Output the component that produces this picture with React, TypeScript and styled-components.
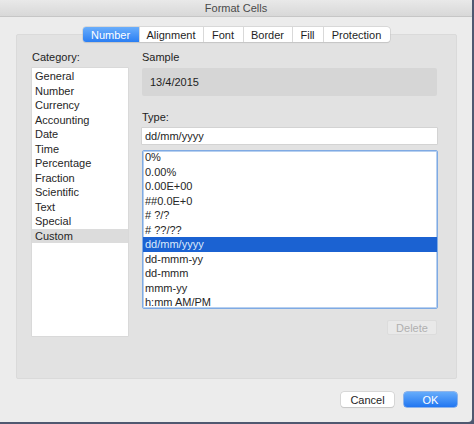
import React from 'react'
import styled, { createGlobalStyle } from 'styled-components'

const GlobalStyle = createGlobalStyle`
  html, body {
    margin: 0;
    padding: 0;
    background: #4f5870;
  }
  body {
    width: 474px;
    height: 424px;
    overflow: hidden;
    font-family: "Liberation Sans", Arial, sans-serif;
    font-size: 10.5px;
    color: #1e1e1e;
  }
`

const Window = styled.div`
  width: 472px;
  height: 422px;
  background: #ececec;
  display: flex;
  flex-direction: column;
  border-bottom-right-radius: 4px;
`

const TitleBar = styled.div`
  height: 16px;
  background: linear-gradient(#e9e9e9, #d8d8d8);
  border-bottom: 1px solid #c6c6c6;
  display: flex;
  align-items: center;
  justify-content: center;
  font-size: 11px;
  color: #4a4a4a;
`

const Body = styled.div`
  flex: 1;
  display: flex;
  flex-direction: column;
  padding: 10px 15px 0 16px;
`

const TabRow = styled.div`
  display: flex;
  justify-content: center;
  position: relative;
  z-index: 1;
  padding-right: 1px;
`

const Tabs = styled.div`
  display: flex;
  height: 15px;
  background: #ffffff;
  border-radius: 3px;
  box-shadow: 0 0 0 0.5px #c4c4c4, 0 1px 1px rgba(0, 0, 0, 0.12);
`

const Tab = styled.div<{ $active?: boolean; $w: number }>`
  width: ${p => p.$w}px;
  display: flex;
  align-items: center;
  justify-content: center;
  font-size: 11px;
  color: ${p => (p.$active ? '#ffffff' : '#1e1e1e')};
  background: ${p => (p.$active ? 'linear-gradient(#6aaefb, #2a7ef3)' : 'transparent')};
  border-radius: ${p => (p.$active ? '3px 0 0 3px' : '0')};
  & + & {
    border-left: 1px solid #d9d9d9;
  }
`

const Panel = styled.div`
  margin-top: -8px;
  height: 345px;
  box-sizing: border-box;
  background: #e2e2e2;
  border: 1px solid #dadada;
  border-radius: 2px;
  display: grid;
  grid-template-columns: 96px 296px;
  column-gap: 14px;
  padding: 16px 0 0 15px;
`

const Column = styled.div`
  display: flex;
  flex-direction: column;
`

const Label = styled.div<{ $gap?: number }>`
  height: 13px;
  line-height: 13px;
  font-size: 11px;
  margin-top: ${p => p.$gap ?? 0}px;
  margin-bottom: 4px;
`

const CategoryList = styled.div`
  height: 268px;
  background: #ffffff;
  box-shadow: 0 0 0 0.5px #cfcfcf;
  padding-top: 1px;
  box-sizing: border-box;
`

const Item = styled.div<{ $selected?: 'gray' | 'blue' }>`
  height: 14.5px;
  line-height: 14.5px;
  padding-left: 3px;
  font-size: 11px;
  white-space: nowrap;
  color: ${p => (p.$selected === 'blue' ? '#dce9fb' : '#262626')};
  background: ${p =>
    p.$selected === 'blue' ? '#1b62d2' : p.$selected === 'gray' ? '#dcdcdc' : 'transparent'};
`

const SampleBox = styled.div`
  height: 28px;
  margin-right: 1px;
  background: #d6d6d6;
  border-radius: 2px;
  display: flex;
  align-items: center;
  padding-left: 8px;
  font-size: 11px;
`

const TypeInput = styled.div`
  height: 16px;
  margin-right: 1px;
  background: #ffffff;
  box-shadow: 0 0 0 0.5px #c4c4c4;
  display: flex;
  align-items: center;
  padding-left: 3px;
  font-size: 11px;
`

const FormatList = styled.div`
  margin-top: 6px;
  height: 159px;
  box-sizing: border-box;
  background: #ffffff;
  border: 1px solid #7faae3;
  box-shadow: inset 0 0 0 1px #b7d0f0;
  border-radius: 2px;
  overflow: hidden;
  & > :first-child {
    margin-top: -1px;
  }
  & > div {
    padding-left: 2px;
  }
`

const Actions = styled.div`
  display: flex;
  justify-content: flex-end;
  margin-top: 11px;
  padding-right: 1px;
`

const DeleteButton = styled.div`
  width: 50px;
  height: 15px;
  background: #e9e9e9;
  border: 1px solid #dcdcdc;
  border-radius: 2px;
  box-sizing: border-box;
  display: flex;
  align-items: center;
  justify-content: center;
  font-size: 11px;
  color: #b0b0b0;
`

const Footer = styled.div`
  display: flex;
  justify-content: flex-end;
  gap: 10px;
  margin-top: 13px;
`

const Button = styled.div<{ $primary?: boolean }>`
  width: 53px;
  height: 15px;
  border-radius: 3px;
  display: flex;
  align-items: center;
  justify-content: center;
  font-size: 11px;
  color: ${p => (p.$primary ? '#ffffff' : '#1e1e1e')};
  background: ${p => (p.$primary ? 'linear-gradient(#66acfb, #2176f1)' : '#ffffff')};
  box-shadow: ${p =>
    p.$primary ? '0 0 0 0.5px #2f7be8' : '0 0 0 0.5px #c4c4c4, 0 1px 1px rgba(0,0,0,0.15)'};
`

const tabs = [
  { label: 'Number', w: 56 },
  { label: 'Alignment', w: 63 },
  { label: 'Font', w: 39 },
  { label: 'Border', w: 48 },
  { label: 'Fill', w: 30 },
  { label: 'Protection', w: 66 },
]

const categories = [
  'General', 'Number', 'Currency', 'Accounting', 'Date', 'Time',
  'Percentage', 'Fraction', 'Scientific', 'Text', 'Special', 'Custom',
]

const formats = [
  '0%', '0.00%', '0.00E+00', '##0.0E+0', '# ?/?', '# ??/??',
  'dd/mm/yyyy', 'dd-mmm-yy', 'dd-mmm', 'mmm-yy', 'h:mm AM/PM',
]

const App = () => (
  <>
    <GlobalStyle />
    <Window>
      <TitleBar>Format Cells</TitleBar>
      <Body>
        <TabRow>
          <Tabs>
            {tabs.map(t => (
              <Tab key={t.label} $w={t.w} $active={t.label === 'Number'}>
                {t.label}
              </Tab>
            ))}
          </Tabs>
        </TabRow>
        <Panel>
          <Column>
            <Label>Category:</Label>
            <CategoryList>
              {categories.map(c => (
                <Item key={c} $selected={c === 'Custom' ? 'gray' : undefined}>
                  {c}
                </Item>
              ))}
            </CategoryList>
          </Column>
          <Column>
            <Label>Sample</Label>
            <SampleBox>13/4/2015</SampleBox>
            <Label $gap={15}>Type:</Label>
            <TypeInput>dd/mm/yyyy</TypeInput>
            <FormatList>
              {formats.map(f => (
                <Item key={f} $selected={f === 'dd/mm/yyyy' ? 'blue' : undefined}>
                  {f}
                </Item>
              ))}
            </FormatList>
            <Actions>
              <DeleteButton>Delete</DeleteButton>
            </Actions>
          </Column>
        </Panel>
        <Footer>
          <Button>Cancel</Button>
          <Button $primary>OK</Button>
        </Footer>
      </Body>
    </Window>
  </>
)

export default App
